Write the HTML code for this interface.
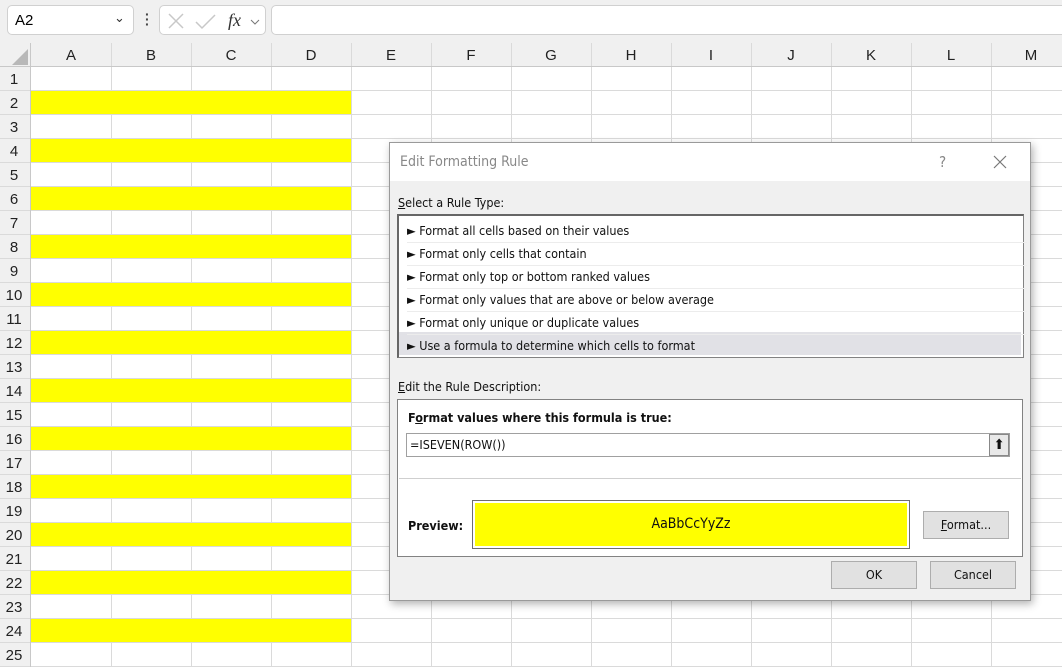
<!DOCTYPE html><html><head><style>
body{margin:0;width:1062px;height:667px;overflow:hidden;background:#fff;font-family:"Liberation Sans",sans-serif;position:relative}
.a{position:absolute}
.fb{background:#f0f0f0;left:0;top:0;width:1062px;height:43px}
.box{background:#fff;border:1px solid #d0d0d0;border-radius:5px}
.hdr{background:#f0f0f0}
.gl{background:#dadada}
.ch{font-size:15px;color:#222;text-align:center;width:80px;top:47px}
.rh{font-size:15px;color:#222;width:24px;text-align:center;left:2px}
.dlg{left:389px;top:142px;width:640px;height:457px;background:#f0f0f0;border:1px solid #9a9a9a;box-shadow:2px 3px 8px rgba(0,0,0,.3);font-family:"DejaVu Sans Condensed","Liberation Sans",sans-serif;font-size:12.5px;color:#111}
.it{left:8px;height:23px;line-height:23px;width:620px;border-bottom:1px solid #ececec}
.btn{background:#e1e1e1;border:1px solid #adadad;text-align:center;line-height:26px}
</style></head><body>
<div class="a fb"></div>
<div class="a box" style="left:7px;top:5px;width:125px;height:28px"><span class="a" style="left:7px;top:6px;font-size:15px">A2</span><span class="a" style="left:106px;top:4px;font-size:13px;color:#333">&#8964;</span></div>
<div class="a" style="left:145px;top:12px;font-size:14px;font-weight:bold;color:#444;line-height:5px">·<br>·<br>·</div>
<div class="a box" style="left:159px;top:5px;width:105px;height:28px">
<svg class="a" style="left:6px;top:6px" width="100" height="18"><path d="M3 2L17 16M17 2L3 16" stroke="#c8c8c8" stroke-width="1.5"/><path d="M30 10L36 16L49 3" stroke="#c8c8c8" stroke-width="1.5" fill="none"/><text x="62" y="14" font-family="Liberation Serif" font-style="italic" font-size="18" fill="#333">fx</text><path d="M85 8L89 12L93 8" stroke="#777" fill="none"/></svg></div>
<div class="a box" style="left:271px;top:5px;width:800px;height:28px"></div>
<!-- headers -->
<div class="a hdr" style="left:0;top:43px;width:1062px;height:24px"></div>
<div class="a hdr" style="left:0;top:43px;width:31px;height:624px"></div>
<svg class="a" style="left:10px;top:47px" width="18" height="18"><path d="M18 2L18 18L2 18Z" fill="#b8b8b8"/></svg>
<div id="g"></div>
<div class="a dlg">
<div class="a" style="left:0;top:0;width:640px;height:38px;background:#fff"></div>
<div class="a" style="left:10px;top:11px;font-size:14px;color:#888">Edit Formatting Rule</div>
<div class="a" style="left:549px;top:10px;font-size:15px;color:#888">?</div>
<svg class="a" style="left:603px;top:12px" width="14" height="14"><path d="M1 1L13 13M13 1L1 13" stroke="#777" stroke-width="1.2"/></svg>
<div class="a" style="left:8px;top:52px"><u>S</u>elect a Rule Type:</div>
<div class="a" style="left:7px;top:71px;width:624px;height:141px;background:#fff;border:1px solid #828282;border-top:2px solid #666;border-left:2px solid #666">
<div class="a" style="left:0;top:116px;width:622px;height:23px;background:#e1e1e6"></div>
<div class="a it" style="top:3px">&#9658; Format all cells based on their values</div>
<div class="a it" style="top:26px">&#9658; Format only cells that contain</div>
<div class="a it" style="top:49px">&#9658; Format only top or bottom ranked values</div>
<div class="a it" style="top:72px">&#9658; Format only values that are above or below average</div>
<div class="a it" style="top:95px">&#9658; Format only unique or duplicate values</div>
<div class="a it" style="top:118px;border:0">&#9658; Use a formula to determine which cells to format</div>
</div>
<div class="a" style="left:8px;top:236px"><u>E</u>dit the Rule Description:</div>
<div class="a" style="left:7px;top:256px;width:624px;height:156px;background:#fff;border:1px solid #828282">
<div class="a" style="left:10px;top:10px;font-weight:bold">F<u>o</u>rmat values where this formula is true:</div>
<div class="a" style="left:8px;top:33px;width:602px;height:22px;border:1px solid #a0a0a0"><span class="a" style="left:3px;top:3px">=ISEVEN(ROW())</span>
<div class="a" style="right:0;top:0;width:18px;height:20px;background:#e8e8e8;border:1px solid #888;font-weight:bold;text-align:center;line-height:20px;font-size:14px">&#11014;</div></div>
<div class="a" style="left:1px;top:78px;width:622px;height:1px;background:#cfcfcf"></div>
<div class="a" style="left:10px;top:118px;font-weight:bold">Preview:</div>
<div class="a" style="left:74px;top:100px;width:436px;height:47px;border:1px solid #6e6e6e;background:#fff"><div class="a" style="left:2px;top:2px;width:432px;height:43px;background:#ff0;text-align:center;line-height:43px;font-size:14px">AaBbCcYyZz</div></div>
<div class="a btn" style="left:525px;top:111px;width:84px;height:26px"><u>F</u>ormat...</div>
</div>
<div class="a btn" style="left:441px;top:418px;width:84px;height:26px">OK</div>
<div class="a btn" style="left:540px;top:418px;width:84px;height:26px">Cancel</div>
</div>
<script>
var g=document.getElementById('g'),h='';
var L='ABCDEFGHIJKLM';
for(var i=0;i<13;i++){var x=31+i*80;h+='<div class="a ch" style="left:'+x+'px">'+L[i]+'</div><div class="a gl" style="left:'+(x+80)+'px;top:43px;width:1px;height:624px"></div>';}
for(var r=1;r<=25;r++){var y=67+(r-1)*24;if(r%2==0)h+='<div class="a" style="left:31px;top:'+y+'px;width:320px;height:24px;background:#ff0"></div>';
h+='<div class="a rh" style="top:'+(y+4)+'px">'+r+'</div><div class="a gl" style="left:0;top:'+(y+23)+'px;width:1062px;height:1px"></div>';}
h+='<div class="a" style="left:30px;top:43px;width:1px;height:624px;background:#c8c8c8"></div><div class="a" style="left:0;top:66px;width:1062px;height:1px;background:#c8c8c8"></div>';
g.innerHTML=h;
</script>
</body></html>
